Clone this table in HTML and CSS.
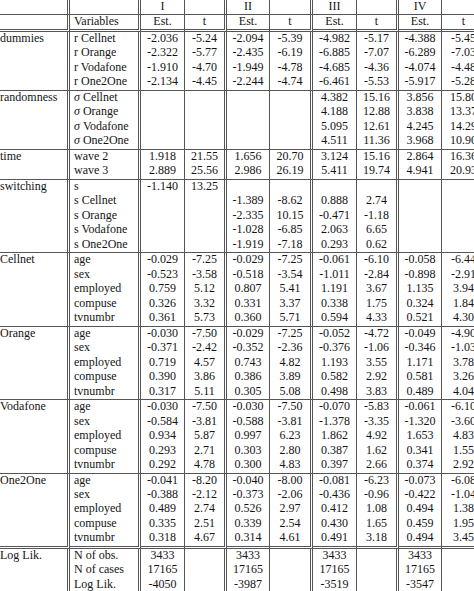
FILE: index.html
```html
<!DOCTYPE html>
<html>
<head>
<meta charset="utf-8">
<link rel="stylesheet" href="styles.css">
</head>
<body>
<table class="tbl">
<colgroup>
<col class="c-lab"><col class="c-var"><col class="c-est"><col class="c-t2"><col class="c-est2"><col class="c-t"><col class="c-est"><col class="c-t2"><col class="c-est2"><col class="c-t">
</colgroup>
<tbody>
<tr class="hd hd1"><td></td><td></td><td>I</td><td></td><td>II</td><td></td><td>III</td><td></td><td>IV</td><td></td></tr>
<tr class="hd hd2"><td></td><td>Variables</td><td>Est.</td><td>t</td><td>Est.</td><td>t</td><td>Est.</td><td>t</td><td>Est.</td><td>t</td></tr>

<tr><td>dummies</td><td>r Cellnet</td><td>-2.036</td><td>-5.24</td><td>-2.094</td><td>-5.39</td><td>-4.982</td><td>-5.17</td><td>-4.388</td><td>-5.45</td></tr>
<tr><td></td><td>r Orange</td><td>-2.322</td><td>-5.77</td><td>-2.435</td><td>-6.19</td><td>-6.885</td><td>-7.07</td><td>-6.289</td><td>-7.03</td></tr>
<tr><td></td><td>r Vodafone</td><td>-1.910</td><td>-4.70</td><td>-1.949</td><td>-4.78</td><td>-4.685</td><td>-4.36</td><td>-4.074</td><td>-4.48</td></tr>
<tr class="end"><td></td><td>r One2One</td><td>-2.134</td><td>-4.45</td><td>-2.244</td><td>-4.74</td><td>-6.461</td><td>-5.53</td><td>-5.917</td><td>-5.28</td></tr>

<tr><td>randomness</td><td><i class="sym">σ</i> Cellnet</td><td></td><td></td><td></td><td></td><td>4.382</td><td>15.16</td><td>3.856</td><td>15.80</td></tr>
<tr><td></td><td><i class="sym">σ</i> Orange</td><td></td><td></td><td></td><td></td><td>4.188</td><td>12.88</td><td>3.838</td><td>13.37</td></tr>
<tr><td></td><td><i class="sym">σ</i> Vodafone</td><td></td><td></td><td></td><td></td><td>5.095</td><td>12.61</td><td>4.245</td><td>14.29</td></tr>
<tr class="end"><td></td><td><i class="sym">σ</i> One2One</td><td></td><td></td><td></td><td></td><td>4.511</td><td>11.36</td><td>3.968</td><td>10.90</td></tr>

<tr><td>time</td><td>wave 2</td><td>1.918</td><td>21.55</td><td>1.656</td><td>20.70</td><td>3.124</td><td>15.16</td><td>2.864</td><td>16.36</td></tr>
<tr class="end"><td></td><td>wave 3</td><td>2.889</td><td>25.56</td><td>2.986</td><td>26.19</td><td>5.411</td><td>19.74</td><td>4.941</td><td>20.93</td></tr>

<tr><td>switching</td><td>s</td><td>-1.140</td><td>13.25</td><td></td><td></td><td></td><td></td><td></td><td></td></tr>
<tr><td></td><td>s Cellnet</td><td></td><td></td><td>-1.389</td><td>-8.62</td><td>0.888</td><td>2.74</td><td></td><td></td></tr>
<tr><td></td><td>s Orange</td><td></td><td></td><td>-2.335</td><td>10.15</td><td>-0.471</td><td>-1.18</td><td></td><td></td></tr>
<tr><td></td><td>s Vodafone</td><td></td><td></td><td>-1.028</td><td>-6.85</td><td>2.063</td><td>6.65</td><td></td><td></td></tr>
<tr class="end"><td></td><td>s One2One</td><td></td><td></td><td>-1.919</td><td>-7.18</td><td>0.293</td><td>0.62</td><td></td><td></td></tr>

<tr><td>Cellnet</td><td>age</td><td>-0.029</td><td>-7.25</td><td>-0.029</td><td>-7.25</td><td>-0.061</td><td>-6.10</td><td>-0.058</td><td>-6.44</td></tr>
<tr><td></td><td>sex</td><td>-0.523</td><td>-3.58</td><td>-0.518</td><td>-3.54</td><td>-1.011</td><td>-2.84</td><td>-0.898</td><td>-2.91</td></tr>
<tr><td></td><td>employed</td><td>0.759</td><td>5.12</td><td>0.807</td><td>5.41</td><td>1.191</td><td>3.67</td><td>1.135</td><td>3.94</td></tr>
<tr><td></td><td>compuse</td><td>0.326</td><td>3.32</td><td>0.331</td><td>3.37</td><td>0.338</td><td>1.75</td><td>0.324</td><td>1.84</td></tr>
<tr class="end"><td></td><td>tvnumbr</td><td>0.361</td><td>5.73</td><td>0.360</td><td>5.71</td><td>0.594</td><td>4.33</td><td>0.521</td><td>4.30</td></tr>

<tr><td>Orange</td><td>age</td><td>-0.030</td><td>-7.50</td><td>-0.029</td><td>-7.25</td><td>-0.052</td><td>-4.72</td><td>-0.049</td><td>-4.90</td></tr>
<tr><td></td><td>sex</td><td>-0.371</td><td>-2.42</td><td>-0.352</td><td>-2.36</td><td>-0.376</td><td>-1.06</td><td>-0.346</td><td>-1.03</td></tr>
<tr><td></td><td>employed</td><td>0.719</td><td>4.57</td><td>0.743</td><td>4.82</td><td>1.193</td><td>3.55</td><td>1.171</td><td>3.78</td></tr>
<tr><td></td><td>compuse</td><td>0.390</td><td>3.86</td><td>0.386</td><td>3.89</td><td>0.582</td><td>2.92</td><td>0.581</td><td>3.26</td></tr>
<tr class="end"><td></td><td>tvnumbr</td><td>0.317</td><td>5.11</td><td>0.305</td><td>5.08</td><td>0.498</td><td>3.83</td><td>0.489</td><td>4.04</td></tr>

<tr><td>Vodafone</td><td>age</td><td>-0.030</td><td>-7.50</td><td>-0.030</td><td>-7.50</td><td>-0.070</td><td>-5.83</td><td>-0.061</td><td>-6.10</td></tr>
<tr><td></td><td>sex</td><td>-0.584</td><td>-3.81</td><td>-0.588</td><td>-3.81</td><td>-1.378</td><td>-3.35</td><td>-1.320</td><td>-3.60</td></tr>
<tr><td></td><td>employed</td><td>0.934</td><td>5.87</td><td>0.997</td><td>6.23</td><td>1.862</td><td>4.92</td><td>1.653</td><td>4.83</td></tr>
<tr><td></td><td>compuse</td><td>0.293</td><td>2.71</td><td>0.303</td><td>2.80</td><td>0.387</td><td>1.62</td><td>0.341</td><td>1.55</td></tr>
<tr class="end"><td></td><td>tvnumbr</td><td>0.292</td><td>4.78</td><td>0.300</td><td>4.83</td><td>0.397</td><td>2.66</td><td>0.374</td><td>2.92</td></tr>

<tr><td>One2One</td><td>age</td><td>-0.041</td><td>-8.20</td><td>-0.040</td><td>-8.00</td><td>-0.081</td><td>-6.23</td><td>-0.073</td><td>-6.08</td></tr>
<tr><td></td><td>sex</td><td>-0.388</td><td>-2.12</td><td>-0.373</td><td>-2.06</td><td>-0.436</td><td>-0.96</td><td>-0.422</td><td>-1.04</td></tr>
<tr><td></td><td>employed</td><td>0.489</td><td>2.74</td><td>0.526</td><td>2.97</td><td>0.412</td><td>1.08</td><td>0.494</td><td>1.38</td></tr>
<tr><td></td><td>compuse</td><td>0.335</td><td>2.51</td><td>0.339</td><td>2.54</td><td>0.430</td><td>1.65</td><td>0.459</td><td>1.95</td></tr>
<tr class="end2"><td></td><td>tvnumbr</td><td>0.318</td><td>4.67</td><td>0.314</td><td>4.61</td><td>0.491</td><td>3.18</td><td>0.494</td><td>3.45</td></tr>

<tr><td>Log Lik.</td><td>N of obs.</td><td>3433</td><td></td><td>3433</td><td></td><td>3433</td><td></td><td>3433</td><td></td></tr>
<tr><td></td><td>N of cases</td><td>17165</td><td></td><td>17165</td><td></td><td>17165</td><td></td><td>17165</td><td></td></tr>
<tr class="end"><td></td><td>Log Lik.</td><td>-4050</td><td></td><td>-3987</td><td></td><td>-3519</td><td></td><td>-3547</td><td></td></tr>
</tbody>
</table>
</body>
</html>
```
FILE: styles.css
```css
html, body {
  margin: 0;
  padding: 0;
  background: #ffffff;
  overflow: hidden;
}

.tbl {
  border-collapse: separate;
  border-spacing: 0;
  table-layout: fixed;
  width: 484px;
  font-family: "Liberation Serif", "Times New Roman", serif;
  font-size: 12px;
  color: #141414;
}

.c-lab { width: 70px; }
.c-var { width: 71px; }
.c-est { width: 44px; }
.c-t2 { width: 42px; }
.c-est2 { width: 43px; }
.c-t { width: 43px; }

.tbl td {
  box-sizing: border-box;
  padding: 0 0 2.2px 0;
  line-height: 12.3px;
  text-align: center;
  white-space: nowrap;
  overflow: hidden;
  vertical-align: top;
}

.tbl td:nth-child(1) {
  text-align: left;
  padding-left: 0;
  border-right: 3px double #555;
}

.tbl td:nth-child(2) {
  text-align: left;
  padding-left: 4px;
  border-right: 3px double #555;
}

.tbl td:nth-child(3),
.tbl td:nth-child(5),
.tbl td:nth-child(7),
.tbl td:nth-child(9) {
  border-right: 1px solid #555;
}

.tbl td:nth-child(4),
.tbl td:nth-child(6),
.tbl td:nth-child(8) {
  border-right: 3px double #555;
}

.tbl tr.hd td {
  padding-bottom: 1.7px;
}

.tbl tr.hd1 td,
.tbl tr.end td {
  border-bottom: 1px solid #555;
}

.tbl tr.hd2 td,
.tbl tr.end2 td {
  border-bottom: 3px double #555;
}

.sym {
  font-style: italic;
}
```
